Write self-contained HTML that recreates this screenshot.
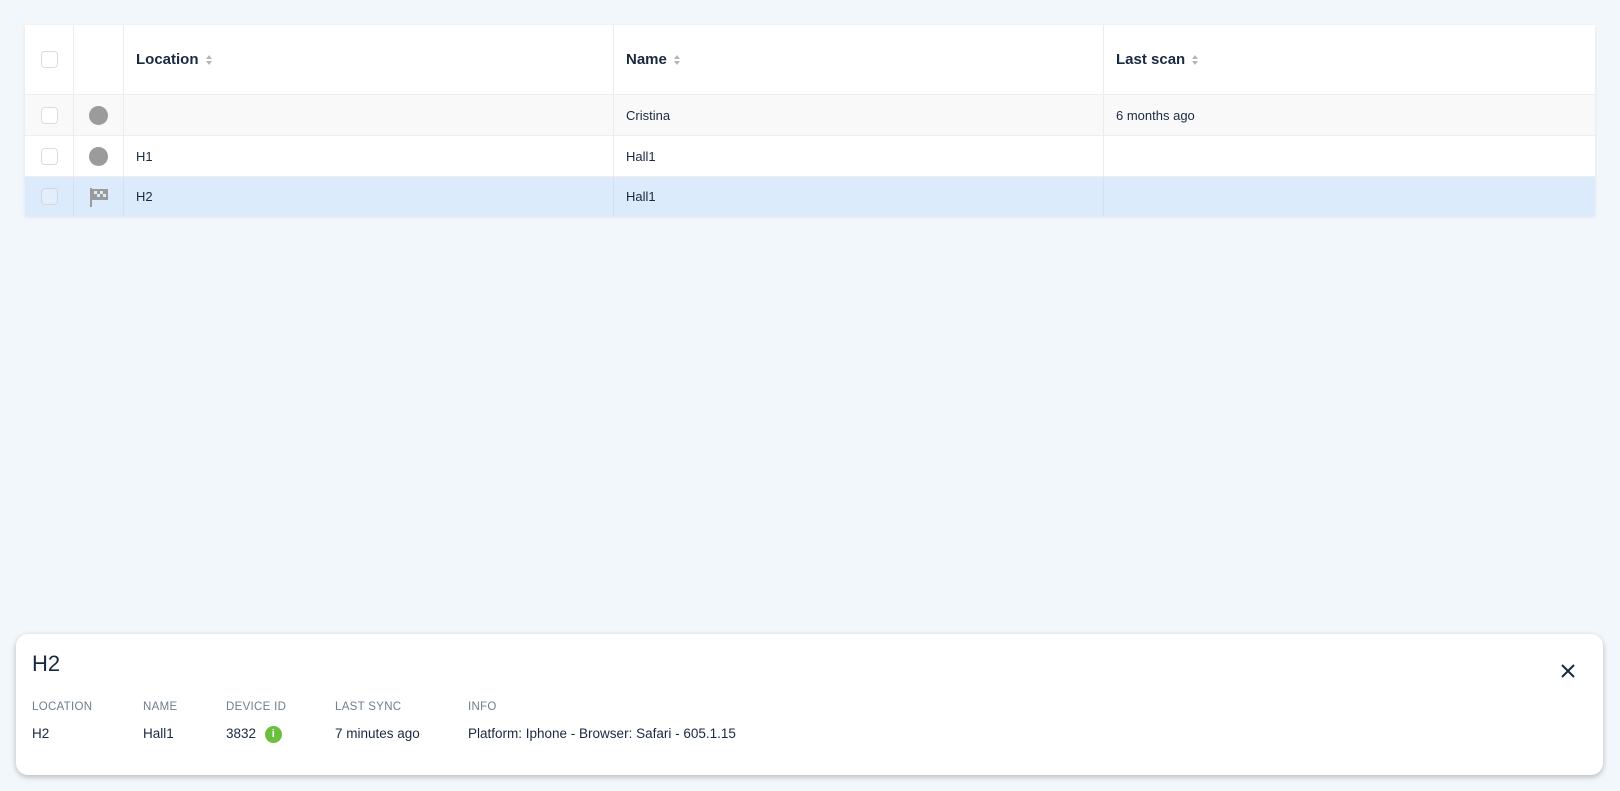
<!DOCTYPE html>
<html><head><style>
*{box-sizing:border-box;margin:0;padding:0}
body{width:1620px;height:791px;background:#f2f7fb;font-family:"Liberation Sans",sans-serif;color:#1a2940;position:relative;overflow:hidden}
.tbl{position:absolute;left:25px;top:25px;width:1570px;background:#fff;box-shadow:0 1px 4px rgba(0,0,0,.08)}
.row{position:relative;display:flex;border-bottom:1px solid #eee}
.c{border-right:1px solid #ececec;display:flex;align-items:center;font-size:13px}
.c:last-child{border-right:none}
.c1{width:49px;justify-content:center}.c2{width:50px;justify-content:center}
.c3{width:490px;padding-left:12px}.c4{width:490px;padding-left:12px}.c5{flex:1;padding-left:12px}
.hd{height:70px}.hd .c{font-weight:bold;font-size:15px}
.r{height:40px}
.cb{width:17px;height:17px;border:1.5px solid #dcdcdc;border-radius:4px;background:#fff}
.dot{width:19px;height:19px;border-radius:50%;background:#9b9b9b}
.sort{display:inline-block;margin-left:6px;vertical-align:middle}
.panel{position:absolute;left:16px;top:634px;width:1587px;height:141px;background:#fff;border-radius:12px;box-shadow:0 2px 6px rgba(0,0,0,.25)}
.lab{position:absolute;top:67px;font-size:11.5px;color:#6f7e8c;letter-spacing:.3px}
.val{position:absolute;top:92px;font-size:13.5px}
</style></head><body>
<div class="tbl">
<div class="row hd"><div class="c c1"><div class="cb"></div></div><div class="c c2"></div>
<div class="c c3">Location<svg class="sort" width="8" height="12"><path d="M4 1L7 5H1Z M4 11L7 7H1Z" fill="#b5b5b5"/></svg></div>
<div class="c c4">Name<svg class="sort" width="8" height="12"><path d="M4 1L7 5H1Z M4 11L7 7H1Z" fill="#b5b5b5"/></svg></div>
<div class="c c5">Last scan<svg class="sort" width="8" height="12"><path d="M4 1L7 5H1Z M4 11L7 7H1Z" fill="#b5b5b5"/></svg></div></div>
<div class="row r" style="background:#f9f9f9;height:41px"><div class="c c1"><div class="cb"></div></div><div class="c c2"><div class="dot"></div></div><div class="c c3"></div><div class="c c4">Cristina</div><div class="c c5">6 months ago</div></div>
<div class="row r" style="height:41px"><div class="c c1"><div class="cb"></div></div><div class="c c2"><div class="dot"></div></div><div class="c c3">H1</div><div class="c c4">Hall1</div><div class="c c5"></div></div>
<div class="row r" style="background:#dcebfc;border-bottom:none;height:39px"><div class="c c1" style="border-color:#d2e0ef"><div class="cb" style="border-color:#cdd8e4;background:#e3eefb"></div></div><div class="c c2" style="border-color:#d2e0ef"><svg width="22" height="20"><rect x="2" y="1" width="2" height="19" fill="#9b9b9b"/><rect x="4" y="2" width="16" height="11" fill="#9b9b9b"/><path d="M6 4h3v3H6zM12 4h3v3h-3zM9 7h3v3H9zM15 7h3v3h-3z" fill="#dcebfc"/></svg></div><div class="c c3" style="border-color:#d2e0ef">H2</div><div class="c c4" style="border-color:#d2e0ef">Hall1</div><div class="c c5"></div></div>
</div>
<div class="panel">
<div style="position:absolute;left:16px;top:17px;font-size:22px">H2</div>
<svg style="position:absolute;left:1545px;top:30px" width="14" height="14"><path d="M1 1L13 13M13 1L1 13" stroke="#1a2940" stroke-width="2"/></svg>
<div class="lab" style="left:16px">LOCATION</div><div class="lab" style="left:127px">NAME</div><div class="lab" style="left:210px">DEVICE ID</div><div class="lab" style="left:319px">LAST SYNC</div><div class="lab" style="left:452px">INFO</div>
<div class="val" style="left:16px">H2</div><div class="val" style="left:127px">Hall1</div><div class="val" style="left:210px">3832 <span style="display:inline-block;width:17px;height:17px;border-radius:50%;background:#6abf3e;color:#fff;font-size:11px;font-weight:bold;text-align:center;line-height:17px;margin-left:5px;vertical-align:middle">i</span></div><div class="val" style="left:319px">7 minutes ago</div><div class="val" style="left:452px">Platform: Iphone - Browser: Safari - 605.1.15</div>
</div>
</body></html>
